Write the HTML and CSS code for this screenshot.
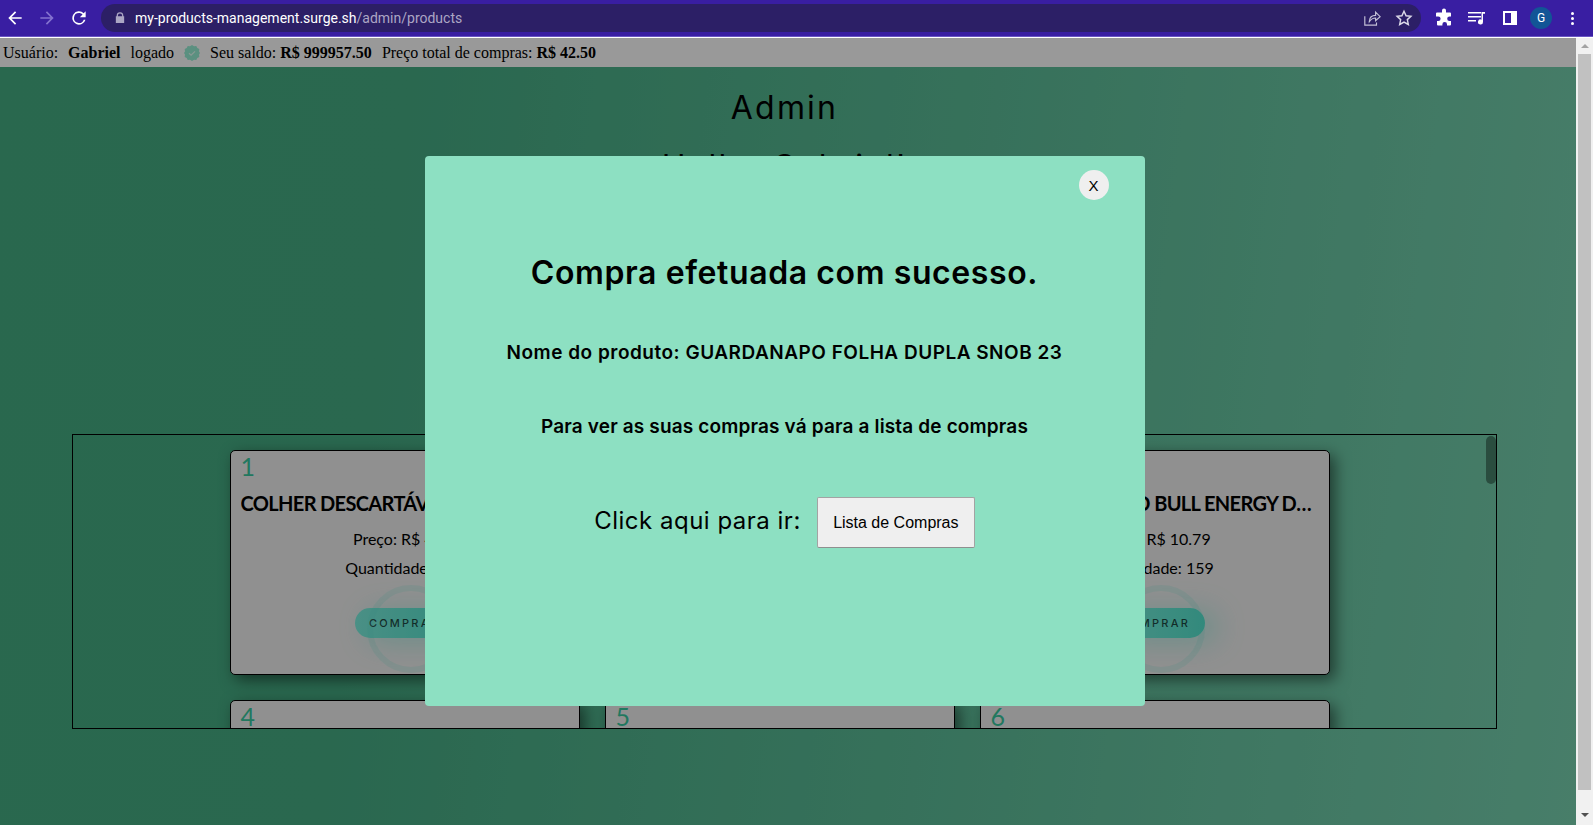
FILE: index.html
```html
<!DOCTYPE html>
<html lang="pt-BR">
<head>
  <meta charset="UTF-8">
  <title>Produtos</title>
  <link rel="stylesheet" href="styles.css">
</head>
<body>
  <header class="browser-bar">
    <div class="nav-icons">
      <svg class="icon" viewBox="0 0 24 24"><path d="M20 11H7.800l5.600-5.600L12 4l-8 8 8 8 1.400-1.400L7.800 13H20z" fill="#fff"/></svg>
      <svg class="icon dim" viewBox="0 0 24 24"><path d="M4 11h12.200l-5.600-5.600L12 4l8 8-8 8-1.400-1.400 5.600-5.600H4z" fill="#8472cf"/></svg>
      <svg class="icon" viewBox="0 0 24 24"><path d="M17.650 6.350A8 8 0 1 0 19.730 14h-2.080A6 6 0 1 1 12 6c1.660 0 3.140.690 4.220 1.780L13 11h7V4z" fill="#fff"/></svg>
    </div>
    <div class="omnibox">
      <svg class="lock" viewBox="0 0 12 14"><path d="M2 5V4a4 4 0 0 1 8 0v1h1v8H1V5zm1.500 0h5V4a2.500 2.500 0 0 0-5 0z" fill="#aba6c4"/></svg>
      <span class="url">my-products-management.surge.sh<span class="url-path">/admin/products</span></span>
      <div class="omni-actions">
        <svg class="icon small" viewBox="0 0 20 20"><path d="M2 8v10h13v-3M7 14c0-5 3-7 7-7V3.500l5 5-5 4.500V10c-3 0-5 1-7 4z" fill="none" stroke="#c3c0d6" stroke-width="1.300"/></svg>
        <svg class="icon small" viewBox="0 0 20 20"><path d="M10 2.500l2.300 5 5.400.6-4 3.700 1.100 5.400-4.800-2.700-4.800 2.700 1.100-5.400-4-3.700 5.400-.6z" fill="none" stroke="#dcdae8" stroke-width="1.600"/></svg>
      </div>
    </div>
    <div class="tool-icons">
      <svg class="icon" viewBox="0 0 20 20"><path d="M8 2a2 2 0 0 1 4 0v2h4a1 1 0 0 1 1 1v3h-1.500a2.300 2.300 0 0 0 0 4.600H17V16a1 1 0 0 1-1 1h-3v-1.300a2.300 2.300 0 0 0-4.600 0V17H4a1 1 0 0 1-1-1v-3.500h1.300a2.300 2.300 0 0 0 0-4.600H2V5a1 1 0 0 1 1-1h5z" fill="#fff" transform="translate(0 .5)"/></svg>
      <svg class="icon" viewBox="0 0 20 20"><path d="M1 4h13v1.600H1zM1 8h13v1.600H1zM1 12h8v1.600H1z" fill="#fff"/><path d="M14.500 4H18v1.800h-2V14a2.500 2.500 0 1 1-1.500-2.300z" fill="#fff"/></svg>
      <span class="side-panel"></span>
      <span class="avatar">G</span>
      <span class="dots"><i></i><i></i><i></i></span>
    </div>
  </header>

  <div class="window">
    <div class="page">
      <div class="user-bar">
        <span>Usuário:</span>
        <b class="user-name">Gabriel</b>
        <span class="logged">logado</span>
        <svg class="badge" viewBox="0 0 16 16"><path d="M8 0l2 1.200 2.300-.2 1 2 2 1.100-.3 2.300L16 8l-1 1.600.3 2.300-2 1.100-1 2-2.300-.2L8 16l-2-1.200-2.300.2-1-2-2-1.100.3-2.300L0 8l1-1.600-.3-2.300 2-1.100 1-2 2.300.2z" fill="#98f0d6"/><path d="M5 8.200l2.100 2L11 6.300" fill="none" stroke="#e4fff6" stroke-width="1.200"/></svg>
        <span class="balance">Seu saldo: <b>R$ 999957.50</b></span>
        <span class="total">Preço total de compras: <b>R$ 42.50</b></span>
      </div>

      <main class="content">
        <h1 class="page-title">Admin</h1>
        <h2 class="page-title hello">Hello, Gabriel!</h2>

        <section class="products">
          <span class="products-thumb"></span>
          <div class="product-grid">
            <article class="card">
              <span class="card-number">1</span>
              <h3 class="card-title">COLHER DESCARTÁVEL CRISTAL 50 UN</h3>
              <p class="card-line">Preço: R$ 4.50</p>
              <p class="card-line">Quantidade: 120</p>
              <button class="buy">Comprar</button>
            </article>
            <article class="card">
              <span class="card-number">2</span>
              <h3 class="card-title">GUARDANAPO FOLHA DUPLA SNOB 23</h3>
              <p class="card-line">Preço: R$ 42.50</p>
              <p class="card-line">Quantidade: 87</p>
              <button class="buy">Comprar</button>
            </article>
            <article class="card">
              <span class="card-number">3</span>
              <h3 class="card-title">ENERGÉTICO RED BULL ENERGY DRINK</h3>
              <p class="card-line">Preço: R$ 10.79</p>
              <p class="card-line">Quantidade: 159</p>
              <button class="buy">Comprar</button>
            </article>
            <article class="card"><span class="card-number">4</span></article>
            <article class="card"><span class="card-number">5</span></article>
            <article class="card"><span class="card-number">6</span></article>
          </div>
        </section>
      </main>

      <div class="overlay">
        <div class="modal">
          <button class="modal-close">X</button>
          <h2 class="modal-title">Compra efetuada com sucesso.</h2>
          <p class="modal-product">Nome do produto: GUARDANAPO FOLHA DUPLA SNOB 23</p>
          <p class="modal-hint">Para ver as suas compras vá para a lista de compras</p>
          <div class="modal-link">
            <span class="modal-link-label">Click aqui para ir:</span>
            <button class="list-button">Lista de Compras</button>
          </div>
        </div>
      </div>
    </div>

    <div class="page-scroll">
      <span class="arrow-up"></span>
      <span class="scroll-thumb"></span>
      <span class="arrow-down"></span>
    </div>
  </div>
</body>
</html>
```

FILE: styles.css
```css
* { box-sizing: border-box; }
html, body { height: 100%; }
body {
  margin: 0;
  display: flex;
  flex-direction: column;
  overflow: hidden;
  background: #fff;
  font-family: "Liberation Serif", serif;
}

/* barra do navegador */
.browser-bar {
  height: 37px;
  flex: none;
  display: flex;
  align-items: center;
  background: #391ea2;
  border-bottom: 1px solid #6a55c4;
  margin-bottom: 1px;
}
.nav-icons {
  width: 101px;
  display: flex;
  gap: 12px;
  padding-left: 5px;
}
.icon { width: 20px; height: 20px; display: block; }
.icon.small { width: 18px; height: 18px; }
.omnibox {
  width: 1320px;
  height: 28px;
  display: flex;
  align-items: center;
  background: #2c1f66;
  border-radius: 14px;
  padding: 0 8px 0 14px;
}
.lock { width: 10px; height: 12px; }
.url {
  margin-left: 10px;
  font: 14px "Roboto", sans-serif;
  color: #fff;
}
.url-path { color: #aba6c4; }
.omni-actions { margin-left: auto; display: flex; gap: 14px; }
.tool-icons {
  flex: 1;
  display: flex;
  align-items: center;
  gap: 13px;
  padding-left: 13px;
}
.side-panel {
  width: 14px;
  height: 14px;
  margin-left: 3px;
  border: 2px solid #fff;
  border-right-width: 6px;
}
.avatar {
  width: 22px;
  height: 22px;
  border-radius: 50%;
  background: #125596;
  color: #fff;
  font: 12px/22px "Roboto", sans-serif;
  text-align: center;
}
.dots { display: flex; flex-direction: column; gap: 2px; margin-left: 6px; }
.dots i { width: 3px; height: 3px; border-radius: 50%; background: #fff; }

/* pagina */
.window { flex: 1; display: flex; min-height: 0; }
.page {
  flex: 1;
  position: relative;
  overflow: hidden;
  background: linear-gradient(97deg, #45ae83, #46ad84 25%, #5cbd98 60%, #78d2b0);
}
.user-bar {
  height: 29px;
  display: flex;
  align-items: center;
  padding-left: 3px;
  background: #fff;
  font-size: 16px;
}
.user-name { margin-left: 10px; }
.logged { margin-left: 10px; }
.badge { width: 16px; height: 16px; margin-left: 10px; }
.balance { margin-left: 10px; }
.total { margin-left: 10px; }

.content { padding-right: 7px; }
.page-title {
  margin: 21px 0 0;
  font: 400 32px/40px "Inter", sans-serif;
  letter-spacing: 2.2px;
  text-align: center;
}
.hello { margin: 19px 0 247px; }

.products {
  position: relative;
  width: 1425px;
  height: 295px;
  margin: 0 auto;
  border: 1px solid #000;
  overflow: hidden;
  padding: 15px 10px 0 0;
}
.products-thumb {
  position: absolute;
  top: 1px;
  right: 0;
  width: 10px;
  height: 48px;
  border-radius: 5px;
  background: #46806a;
}
.product-grid {
  display: grid;
  grid-template-columns: repeat(3, 350px);
  gap: 25px;
  justify-content: center;
}
.card {
  height: 225px;
  padding: 0 10px;
  background: #f0f0f0;
  border: 1px solid #000;
  border-radius: 5px;
  box-shadow: 5px 5px 15px rgba(0, 0, 0, .5);
  font-family: "Lato", sans-serif;
  text-align: center;
}
.card-number {
  display: block;
  font-size: 25px;
  line-height: 30px;
  color: #38c89f;
  text-align: left;
}
.card-title {
  margin: 10px 0 9px;
  padding-right: 6px;
  font-size: 20px;
  line-height: 24px;
  letter-spacing: -.65px;
  white-space: nowrap;
  overflow: hidden;
  text-overflow: ellipsis;
  text-align: left;
}
.card-line {
  margin: 0;
  font-size: 16px;
  line-height: 29px;
}
.buy {
  position: relative;
  display: block;
  width: 100px;
  height: 30px;
  margin: 26px auto 0;
  border: none;
  border-radius: 15px;
  background: linear-gradient(90deg, #7cf0df, #55e6cf);
  box-shadow: 12px 4px 28px rgba(85, 230, 207, .4);
  font: 500 11px "Inter", sans-serif;
  letter-spacing: 2.2px;
  text-transform: uppercase;
  color: rgba(0, 0, 0, .7);
}
.buy::before {
  content: "";
  position: absolute;
  top: -23px;
  left: 12px;
  width: 76px;
  height: 76px;
  border: 6px solid rgba(85, 230, 207, .15);
  border-radius: 50%;
}

/* modal */
.overlay {
  position: absolute;
  inset: 0;
  padding: 0 7px 1px 0;
  display: flex;
  align-items: center;
  justify-content: center;
  background: rgba(0, 0, 0, .4);
}
.modal {
  position: relative;
  width: 720px;
  height: 550px;
  padding-top: 95px;
  background: #8de0c2;
  border-radius: 4px;
  font-family: "Inter", sans-serif;
  text-align: center;
  color: #000;
}
.modal-close {
  position: absolute;
  top: 14px;
  right: 36px;
  width: 30px;
  height: 30px;
  padding: 0;
  border: none;
  border-radius: 50%;
  background: #efefef;
  font: 15px "Liberation Sans", sans-serif;
}
.modal-title {
  margin: 0;
  font-size: 32px;
  font-weight: 600;
  line-height: 44px;
  letter-spacing: .6px;
}
.modal-product {
  margin: 46px 0 0;
  font-size: 19px;
  font-weight: 600;
  line-height: 24px;
  letter-spacing: .5px;
}
.modal-hint {
  margin: 50px 0 0;
  font-size: 19px;
  font-weight: 600;
  line-height: 24px;
  letter-spacing: .15px;
}
.modal-link {
  display: flex;
  align-items: center;
  justify-content: center;
  gap: 16px;
  margin-top: 58px;
  font-size: 24px;
}
.modal-link-label { margin-bottom: 4px; letter-spacing: .5px; }
.list-button {
  width: 158px;
  height: 51px;
  padding: 0;
  background: #efefef;
  border: 1px solid #a3a3a3;
  border-bottom-color: #8f8f8f;
  border-radius: 2px;
  font: 16px "Liberation Sans", sans-serif;
  color: #000;
}

/* scrollbar da janela */
.page-scroll {
  width: 17px;
  flex: none;
  display: flex;
  flex-direction: column;
  align-items: center;
  background: #f1f1f1;
}
.arrow-up, .arrow-down {
  width: 0;
  height: 0;
  border-left: 4px solid transparent;
  border-right: 4px solid transparent;
}
.arrow-up { margin-top: 6px; border-bottom: 4px solid #a3a3a3; }
.arrow-down { margin-top: 23px; border-top: 4px solid #505050; }
.scroll-thumb {
  width: 13px;
  height: 736px;
  margin-top: 6px;
  background: #c1c1c1;
}
```
